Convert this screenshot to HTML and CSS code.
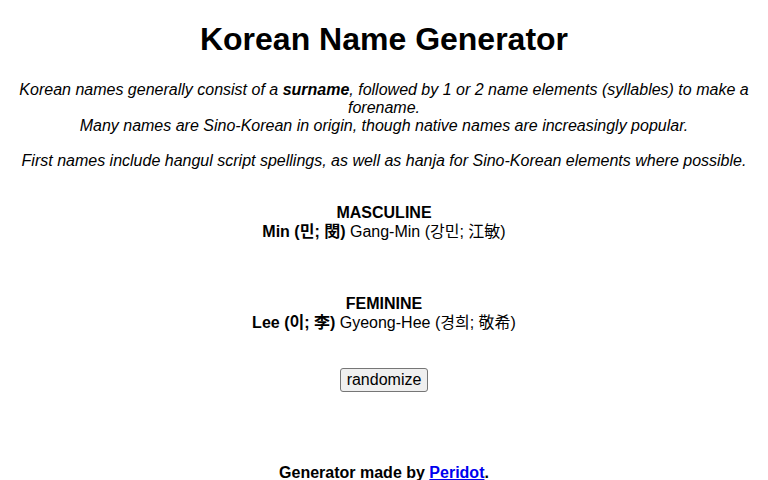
FILE: index.html
```html
<!DOCTYPE html>
<html lang="en">
<head>
<meta charset="utf-8">
<title>Korean Name Generator</title>
<link rel="stylesheet" href="styles.css">
</head>
<body>
<main class="page">
  <h1 class="title">Korean Name Generator</h1>
  <p class="intro">Korean names generally consist of a <b>surname</b>, followed by 1 or 2 name elements (syllables) to make a forename.<br>Many names are Sino-Korean in origin, though native names are increasingly popular.</p>
  <p class="intro">First names include hangul script spellings, as well as hanja for Sino-Korean elements where possible.</p>

  <section class="result result-first">
    <div class="gender">MASCULINE</div>
    <div class="name"><b>Min (민; 閔)</b> Gang-Min (강민; 江敏)</div>
  </section>

  <section class="result">
    <div class="gender">FEMININE</div>
    <div class="name"><b>Lee (이; 李)</b> Gyeong-Hee (경희; 敬希)</div>
  </section>

  <div class="actions">
    <button class="btn" type="button">randomize</button>
  </div>

  <footer class="credit">Generator made by <a href="#">Peridot</a>.</footer>
</main>
</body>
</html>
```

FILE: styles.css
```css
html, body {
  margin: 0;
  padding: 0;
  background: #ffffff;
}

body {
  font-family: "Liberation Sans", Arial, "Noto Sans CJK KR", sans-serif;
  font-size: 16px;
  color: #000000;
}

.page {
  padding: 0 8px;
  text-align: center;
}

.title {
  font-size: 32px;
  font-weight: bold;
  margin: 0;
  padding-top: 21.44px;
  line-height: 36.8px;
  margin-bottom: 22.4px;
}

.intro {
  font-style: italic;
  margin: 0 0 16px 0;
  line-height: 18.4px;
}

.result {
  line-height: 19px;
}

.result-first {
  margin-top: 33px;
}

.result + .result {
  margin-top: 53px;
}

.gender {
  font-weight: bold;
}

.name b {
  font-weight: bold;
}

.actions {
  margin-top: 36px;
}

.btn {
  font-family: "Liberation Sans", Arial, sans-serif;
  font-size: 16px;
  color: #000000;
  background: #efefef;
  border: 1px solid #767676;
  border-radius: 3px;
  padding: 2px 6px;
  line-height: 18px;
}

.credit {
  margin-top: 72px;
  font-weight: bold;
  line-height: 18px;
}

.credit a {
  color: #0000ee;
  text-decoration: underline;
}
```
